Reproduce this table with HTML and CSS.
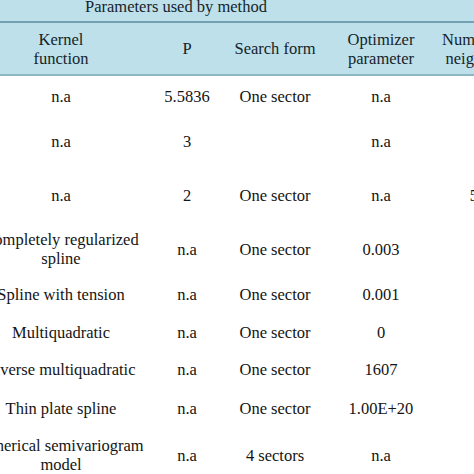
FILE: index.html
```html
<!DOCTYPE html>
<html>
<head>
<meta charset="utf-8">
<link rel="stylesheet" href="styles.css">
</head>
<body>
<div class="frame">
<table class="params">
  <colgroup>
    <col class="c1"><col class="c2"><col class="c3"><col class="c4"><col class="c5">
  </colgroup>
  <thead>
    <tr class="group-row">
      <th colspan="5" class="group">Parameters used by method</th>
    </tr>
    <tr class="head-row">
      <th>Kernel<br>function</th>
      <th>P</th>
      <th>Search form</th>
      <th>Optimizer<br>parameter</th>
      <th>Number of<br>neighbors</th>
    </tr>
  </thead>
  <tbody>
    <tr class="r1"><td>n.a</td><td>5.5836</td><td>One sector</td><td>n.a</td><td class="edge">15</td></tr>
    <tr class="r2"><td>n.a</td><td>3</td><td></td><td>n.a</td><td></td></tr>
    <tr class="r3"><td>n.a</td><td>2</td><td>One sector</td><td>n.a</td><td>5&nbsp;&nbsp;</td></tr>
    <tr class="r4"><td>Completely regularized<br>spline</td><td>n.a</td><td>One sector</td><td>0.003</td><td class="edge">15</td></tr>
    <tr class="r5"><td>Spline with tension</td><td>n.a</td><td>One sector</td><td>0.001</td><td class="edge">15</td></tr>
    <tr class="r6"><td>Multiquadratic</td><td>n.a</td><td>One sector</td><td>0</td><td class="edge">15</td></tr>
    <tr class="r7"><td>Inverse multiquadratic</td><td>n.a</td><td>One sector</td><td>1607</td><td class="edge">15</td></tr>
    <tr class="r8"><td>Thin plate spline</td><td>n.a</td><td>One sector</td><td>1.00E+20</td><td class="edge">15</td></tr>
    <tr class="r9"><td>Spherical semivariogram<br>model</td><td>n.a</td><td>4 sectors</td><td>n.a</td><td class="edge">15</td></tr>
  </tbody>
</table>
</div>
</body>
</html>
```
FILE: styles.css
```css
html, body {
  margin: 0;
  padding: 0;
  background: #ffffff;
}
.frame {
  width: 474px;
  height: 474px;
  overflow: hidden;
}
.params {
  border-collapse: collapse;
  table-layout: fixed;
  width: 540px;
  margin-left: -24px;
  margin-top: -8px;
  font-family: "Liberation Serif", "Times New Roman", serif;
  font-size: 16.5px;
  line-height: 19px;
  color: #141414;
}
.c1 { width: 170px; }
.c2 { width: 82px; }
.c3 { width: 94px; }
.c4 { width: 118px; }
.c5 { width: 76px; }
.params th {
  background: #bde0ea;
  color: #15242b;
  font-weight: normal;
  text-align: center;
  vertical-align: middle;
  padding: 0;
}
.group-row th {
  height: 29px;
  text-align: left;
  padding-left: 109px;
  border-bottom: 2px solid #74a2b3;
}
.head-row th {
  height: 51px;
  border-bottom: 2px solid #8db6c5;
}
.params td {
  text-align: center;
  vertical-align: middle;
  padding: 0;
  white-space: nowrap;
}
.params td.edge {
  padding-left: 6px;
}
.r1 td { height: 40px; }
.r2 td { height: 50px; }
.r3 td { height: 58px; }
.r4 td { height: 50px; }
.r5 td { height: 40px; }
.r6 td { height: 36px; }
.r7 td { height: 38px; }
.r8 td { height: 40px; }
.r9 td { height: 54px; }
```
